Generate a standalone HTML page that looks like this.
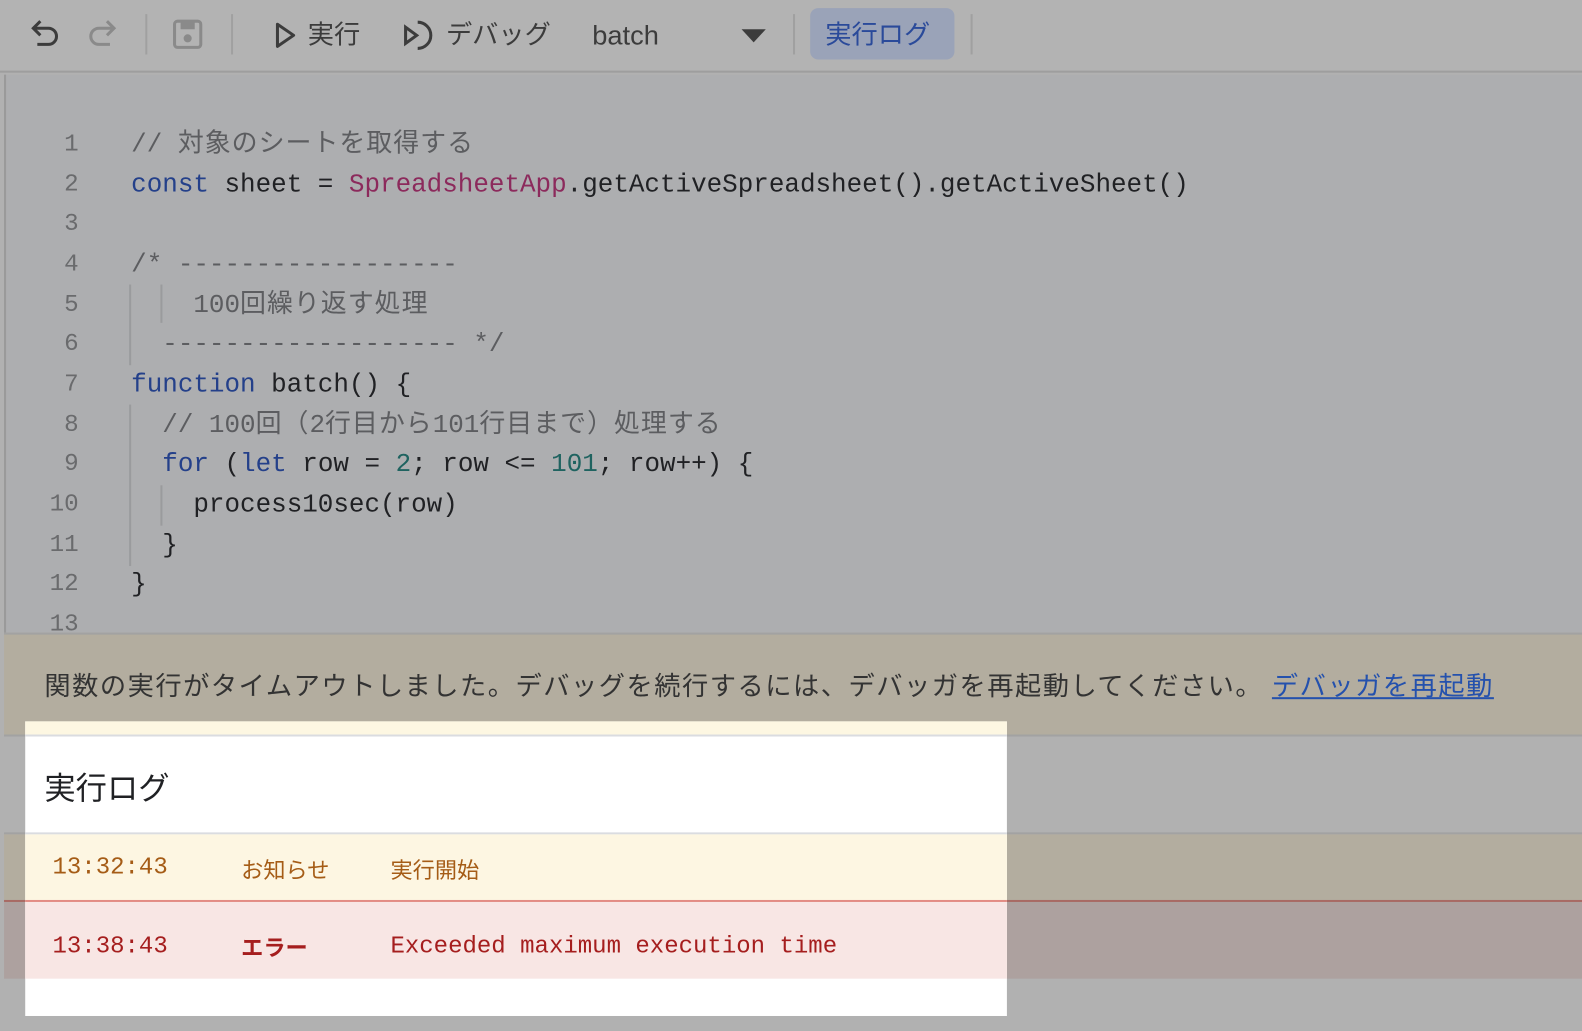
<!DOCTYPE html>
<html><head><meta charset="utf-8"><style>
*{margin:0;padding:0;box-sizing:border-box}
body{width:1582px;height:1031px;overflow:hidden;background:#b1b1b1;font-family:"Liberation Sans","Noto Sans CJK JP",sans-serif;position:relative}
#w{position:absolute;left:0;top:0;width:1568px;height:1022px;transform:scale(1.00893);transform-origin:0 0}
.abs{position:absolute}
#tb{left:0;top:0;width:1568px;height:72px;background:#b3b3b3;border-bottom:2px solid #9e9e9e}
#tb .t{position:absolute;top:14px;font-size:26px;color:#3c3c3c;white-space:nowrap}
.sep{position:absolute;top:14px;width:2px;height:40px;background:#a0a0a0}
#code{left:4px;top:74px;width:1564px;height:553px;background:#adaeb0;border-left:2px solid #9a9a9a;overflow:hidden}
.ln{position:absolute;left:0;width:72px;text-align:right;font-family:"Liberation Mono",monospace;font-size:24px;color:#6a6b6d;height:40px;line-height:40px}
.cl{position:absolute;left:124px;font-family:"Liberation Mono","Noto Sans CJK JP",monospace;font-size:25.7px;color:#202124;white-space:pre;height:40px;line-height:40px}
.j{letter-spacing:1px}
.c{color:#5c5d60}.k{color:#24408a}.p{color:#8c2a5c}.n{color:#1f6360}
.g{position:absolute;width:2px;background:#9a9b9d}
#ban{left:4px;top:627px;width:1564px;height:101px;background:#b3ad9f;border-top:2px solid #a2a2a2}
#ban .t{position:absolute;left:40px;top:31px;font-size:26px;letter-spacing:1.5px;color:#333;white-space:nowrap}
#ban a{color:#2451ad;text-decoration:underline}
</style></head><body><div id="w">
<div id="tb" class="abs">
<svg class="abs" style="left:28px;top:18px" width="36" height="32" viewBox="0 0 36 32"><path d="M6 10h14a8 8 0 0 1 0 16H9" fill="none" stroke="#3c3c3c" stroke-width="3"/><path d="M12 3L5 10l7 7" fill="none" stroke="#3c3c3c" stroke-width="3"/></svg>
<svg class="abs" style="left:84px;top:18px" width="36" height="32" viewBox="0 0 36 32"><path d="M28 10H14a8 8 0 0 0 0 16h11" fill="none" stroke="#8a8a8a" stroke-width="3"/><path d="M22 3l7 7-7 7" fill="none" stroke="#8a8a8a" stroke-width="3"/></svg>
<div class="sep" style="left:144px"></div>
<svg class="abs" style="left:170px;top:18px" width="32" height="32" viewBox="0 0 32 32"><rect x="3" y="3" width="26" height="26" rx="3" fill="none" stroke="#8a8a8a" stroke-width="3"/><rect x="9" y="4" width="14" height="7" fill="#8a8a8a"/><circle cx="16" cy="20" r="4" fill="#8a8a8a"/></svg>
<div class="sep" style="left:229px"></div>
<svg class="abs" style="left:272px;top:22px" width="22" height="26" viewBox="0 0 22 26"><path d="M3 2l16 11L3 24z" fill="none" stroke="#3c3c3c" stroke-width="3" stroke-linejoin="round"/></svg>
<div class="t" style="left:305px">実行</div>
<svg class="abs" style="left:398px;top:18px" width="36" height="34" viewBox="0 0 36 34"><path d="M4 9l11 8-11 8z" fill="none" stroke="#3c3c3c" stroke-width="3"/><path d="M16 4a13 13 0 1 1 0 26" fill="none" stroke="#3c3c3c" stroke-width="3"/></svg>
<div class="t" style="left:442px">デバッグ</div>
<div class="t" style="left:587px;top:20px;font-size:27px">batch</div>
<svg class="abs" style="left:734px;top:28px" width="26" height="16" viewBox="0 0 26 16"><path d="M1 1h24L13 14z" fill="#3c3c3c"/></svg>
<div class="sep" style="left:786px"></div>
<div class="abs" style="left:803px;top:8px;width:143px;height:51px;background:#9aa3b8;border-radius:8px"></div>
<div class="t" style="left:818px;color:#2a4a9a">実行ログ</div>
<div class="sep" style="left:962px"></div>
</div>
<div id="code" class="abs">
<div class="ln" style="top:50px">1</div><div class="ln" style="top:90px">2</div><div class="ln" style="top:129px">3</div><div class="ln" style="top:169px">4</div><div class="ln" style="top:209px">5</div><div class="ln" style="top:248px">6</div><div class="ln" style="top:288px">7</div><div class="ln" style="top:328px">8</div><div class="ln" style="top:367px">9</div><div class="ln" style="top:407px">10</div><div class="ln" style="top:447px">11</div><div class="ln" style="top:486px">12</div><div class="ln" style="top:526px">13</div>
<div class="g" style="left:122px;top:208px;height:80px"></div>
<div class="g" style="left:153px;top:208px;height:38px"></div>
<div class="g" style="left:122px;top:327px;height:160px"></div>
<div class="g" style="left:153px;top:407px;height:40px"></div>
<div class="cl c" style="top:50px">// <span class="j">対象のシートを取得する</span></div>
<div class="cl" style="top:90px"><span class="k">const</span> sheet = <span class="p">SpreadsheetApp</span>.getActiveSpreadsheet().getActiveSheet()</div>
<div class="cl c" style="top:169px">/* ------------------</div>
<div class="cl c" style="top:209px">    100<span class="j">回繰り返す処理</span></div>
<div class="cl c" style="top:248px">  ------------------- */</div>
<div class="cl" style="top:288px"><span class="k">function</span> batch() {</div>
<div class="cl c" style="top:328px">  // 100<span class="j">回（</span>2<span class="j">行目から</span>101<span class="j">行目まで）処理する</span></div>
<div class="cl" style="top:367px">  <span class="k">for</span> (<span class="k">let</span> row = <span class="n">2</span>; row &lt;= <span class="n">101</span>; row++) {</div>
<div class="cl" style="top:407px">    process10sec(row)</div>
<div class="cl" style="top:447px">  }</div>
<div class="cl" style="top:486px">}</div>
</div>
<div id="ban" class="abs"><div class="t">関数の実行がタイムアウトしました。デバッグを続行するには、デバッガを再起動してください。 <a>デバッガを再起動</a></div></div>
<div class="abs" style="left:4px;top:728px;width:1564px;height:2px;background:#a2a2a2"></div>
<div class="abs" style="left:4px;top:825px;width:1564px;height:2px;background:#a2a2a2"></div>
<div class="abs" style="left:4px;top:827px;width:1564px;height:65px;background:#b3ad9f"></div>
<div class="abs" style="left:4px;top:892px;width:1564px;height:2px;background:#a86a64"></div>
<div class="abs" style="left:4px;top:894px;width:1564px;height:76px;background:#ada19f"></div>
<div class="abs" style="left:25px;top:715px;width:973px;height:292px;background:#fff">
<div class="abs" style="left:0;top:0;width:973px;height:13px;background:#fdf7e2"></div>
<div class="abs" style="left:0;top:13px;width:973px;height:2px;background:#dadce0"></div>
<div class="abs" style="left:19px;top:41px;font-size:31px;color:#202124">実行ログ</div>
<div class="abs" style="left:0;top:110px;width:973px;height:2px;background:#dadce0"></div>
<div class="abs" style="left:0;top:112px;width:973px;height:65px;background:#fdf6e2;color:#a55c16;font-size:22px">
<span class="abs" style="left:27px;top:20px;font-family:'Liberation Mono',monospace;font-size:23.8px">13:32:43</span><span class="abs" style="left:214px;top:18px">お知らせ</span><span class="abs" style="left:362px;top:18px">実行開始</span></div>
<div class="abs" style="left:0;top:177px;width:973px;height:2px;background:#e38c84"></div>
<div class="abs" style="left:0;top:179px;width:973px;height:76px;background:#f8e6e4;color:#a51e1e;font-size:22px">
<span class="abs" style="left:27px;top:31px;font-family:'Liberation Mono',monospace;font-size:23.8px">13:38:43</span><span class="abs" style="left:214px;top:28px;font-weight:bold">エラー</span><span class="abs" style="left:362px;top:31px;font-family:'Liberation Mono',monospace;font-size:23.8px">Exceeded maximum execution time</span></div>
</div>
</div></body></html>
